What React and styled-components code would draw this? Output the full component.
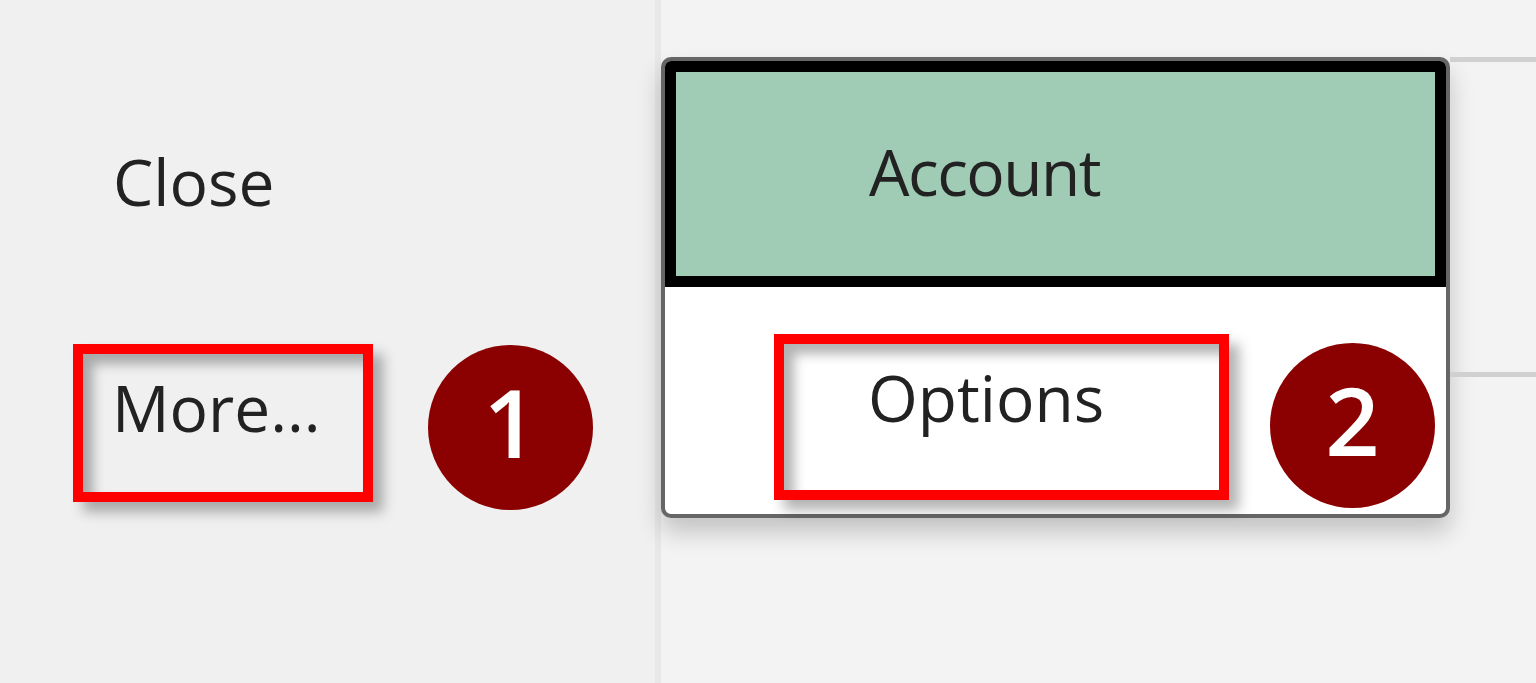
import React from "react";
import styled, { createGlobalStyle } from "styled-components";

const GlobalStyle = createGlobalStyle`
  body {
    margin: 0;
    font-family: "Open Sans", "Noto Sans", sans-serif;
    background: #f3f3f3;
  }
`;

const Page = styled.div`
  display: flex;
  width: 1536px;
  height: 683px;
  overflow: hidden;
`;

const LeftPanel = styled.div`
  width: 655px;
  flex-shrink: 0;
  background: #f0f0f0;
  padding: 150px 0 0 73px;
  box-sizing: border-box;
`;

const Divider = styled.div`
  width: 6px;
  flex-shrink: 0;
  background: #e8e8e8;
`;

const RightPanel = styled.div`
  flex: 1;
  display: flex;
  align-items: flex-start;
  padding-top: 57px;
  background: #f3f3f3;
`;

const Label = styled.div`
  font-size: 64px;
  line-height: 1;
  color: #222222;
  margin-left: ${(p) => p.indent || 0}px;
  letter-spacing: ${(p) => p.spacing || 0}px;
`;

const CalloutRow = styled.div`
  display: flex;
  align-items: flex-start;
  margin-top: ${(p) => p.top}px;
  margin-left: ${(p) => p.left || 0}px;
`;

const Highlight = styled.div`
  width: ${(p) => p.w}px;
  height: ${(p) => p.h}px;
  box-sizing: border-box;
  border: 10px solid #ff0000;
  padding: 22px 0 0 ${(p) => p.pad}px;
  background: ${(p) => p.bg};
  box-shadow: 10px 10px 12px rgba(0, 0, 0, 0.3),
    inset 10px 10px 12px rgba(0, 0, 0, 0.3);
`;

const Badge = styled.div`
  width: 165px;
  height: 165px;
  flex-shrink: 0;
  box-sizing: border-box;
  padding-bottom: 12px;
  border-radius: 50%;
  background: #8b0000;
  color: #ffffff;
  display: flex;
  align-items: center;
  justify-content: center;
  font-size: 95px;
  font-weight: 600;
  line-height: 1;
  margin-left: ${(p) => p.gap}px;
  margin-top: ${(p) => p.drop}px;
`;

const Card = styled.div`
  width: 789px;
  height: 461px;
  flex-shrink: 0;
  box-sizing: border-box;
  border: 4px solid #666666;
  border-radius: 10px;
  background: #ffffff;
  box-shadow: 0 14px 24px rgba(0, 0, 0, 0.2);
`;

const CardHeader = styled.div`
  height: 226px;
  box-sizing: border-box;
  border: 11px solid #000000;
  border-radius: 6px 6px 0 0;
  background: #a0cbb4;
  padding: 68px 0 0 193px;
`;

const SideList = styled.div`
  flex: 1;
  display: flex;
  flex-direction: column;
`;

const SideRow = styled.div`
  height: 310px;
  border-top: 5px solid #d0d0d0;
`;

export default function App() {
  return (
    <>
      <GlobalStyle />
      <Page>
        <LeftPanel>
          <Label indent={40}>Close</Label>
          <CalloutRow top={130}>
            <Highlight w={300} h={158} pad={29} bg="#f0f0f0">
              <Label>More...</Label>
            </Highlight>
            <Badge gap={55} drop={1}>1</Badge>
          </CalloutRow>
        </LeftPanel>
        <Divider />
        <RightPanel>
          <Card>
            <CardHeader>
              <Label spacing={-1.5}>Account</Label>
            </CardHeader>
            <CalloutRow top={47} left={109}>
              <Highlight w={455} h={166} pad={84} bg="#ffffff">
                <Label>Options</Label>
              </Highlight>
              <Badge gap={41} drop={9}>2</Badge>
            </CalloutRow>
          </Card>
          <SideList>
            <SideRow />
            <SideRow />
          </SideList>
        </RightPanel>
      </Page>
    </>
  );
}
